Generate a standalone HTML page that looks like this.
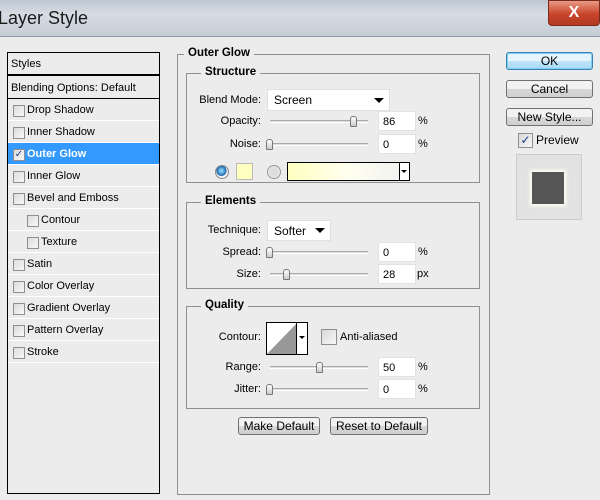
<!DOCTYPE html>
<html><head><style>
*{box-sizing:border-box;margin:0;padding:0}
body{width:600px;height:500px;overflow:hidden;background:#ececec;font-family:"Liberation Sans",sans-serif;font-size:11px;color:#000;position:relative}
.a{position:absolute}
.title{left:0;top:0;width:600px;height:37px;background:linear-gradient(#bfc8d2,#d6dce3 40%,#c4ccd5);border-bottom:1px solid #8e99a5}
.list{left:7px;top:52px;width:153px;height:442px;border:1px solid #000;background:#ececec}
.row{position:absolute;left:0;width:151px;height:22px;border-bottom:1px solid #fff;line-height:22px;padding-left:19px}
.cb{position:absolute;width:12px;height:12px;border:1px solid #8f8f8f;background:linear-gradient(135deg,#dcdcdc,#f8f8f8);top:6px;left:5px}
.grp{position:absolute;border:1px solid #8f8f8f}
.lg{position:absolute;top:-8px;background:#ececec;padding:0 4px;font-weight:bold;font-size:11.5px}
.lbl{position:absolute;text-align:right;width:100px}
.inp{position:absolute;width:38px;height:20px;background:#fff;border:1px solid #e2e2e2;padding:4px 0 0 4px}
.trk{position:absolute;height:3px;border-top:1px solid #aaa;border-bottom:1px solid #fff;background:#ddd;width:98px}
.th{position:absolute;width:7px;height:11px;border:1px solid #777;border-radius:3px 3px 1px 1px;background:linear-gradient(#fff,#ccc)}
.btn{position:absolute;border:1px solid #707070;border-radius:3px;background:linear-gradient(#f2f2f2 50%,#d8d8d8 50%,#cfcfcf);text-align:center;line-height:16px;font-size:12px}
.dd{position:absolute;background:#fff;border:1px solid #e0e0e0;font-size:12px;padding:3px 0 0 6px}
.tri{position:absolute;width:0;height:0;border-left:5px solid transparent;border-right:5px solid transparent;border-top:5px solid #000}
</style></head><body>
<div class="a title"></div>
<div class="a" style="left:-2px;top:8px;font-size:18px;color:#1a1a1a">Layer Style</div>
<div class="a" style="left:548px;top:0;width:52px;height:26px;border-radius:0 0 4px 4px;background:linear-gradient(#e89a85,#c8442a 55%,#b33a22);border:1px solid #7a2a1c;color:#fff;font-weight:bold;font-size:16px;text-align:center;line-height:24px">X</div>

<div class="a list">
<div class="row" style="top:0;height:23px;padding-left:3px;border-bottom:2px solid #000">Styles</div>
<div class="row" style="top:24px;height:22px;padding-left:3px;border-bottom:1px solid #000">Blending Options: Default</div>
<div class="row" style="top:46px"><span class="cb"></span>Drop Shadow</div>
<div class="row" style="top:68px"><span class="cb"></span>Inner Shadow</div>
<div class="row" style="top:90px;background:#3399ff;color:#fff;font-weight:bold"><span class="cb" style="color:#1a3a8a;font-size:10px;line-height:10px;text-align:center;font-weight:normal">✓</span>Outer Glow</div>
<div class="row" style="top:112px"><span class="cb"></span>Inner Glow</div>
<div class="row" style="top:134px"><span class="cb"></span>Bevel and Emboss</div>
<div class="row" style="top:156px;padding-left:33px"><span class="cb" style="left:19px"></span>Contour</div>
<div class="row" style="top:178px;padding-left:33px"><span class="cb" style="left:19px"></span>Texture</div>
<div class="row" style="top:200px"><span class="cb"></span>Satin</div>
<div class="row" style="top:222px"><span class="cb"></span>Color Overlay</div>
<div class="row" style="top:244px"><span class="cb"></span>Gradient Overlay</div>
<div class="row" style="top:266px"><span class="cb"></span>Pattern Overlay</div>
<div class="row" style="top:288px"><span class="cb"></span>Stroke</div>
</div>

<div class="grp" style="left:177px;top:54px;width:313px;height:441px"><span class="lg" style="left:6px">Outer Glow</span></div>
<div class="grp" style="left:186px;top:73px;width:294px;height:110px"><span class="lg" style="left:14px">Structure</span></div>
<div class="grp" style="left:186px;top:202px;width:294px;height:87px"><span class="lg" style="left:14px">Elements</span></div>
<div class="grp" style="left:186px;top:306px;width:294px;height:103px"><span class="lg" style="left:14px">Quality</span></div>

<div class="lbl" style="left:161px;top:94px">Blend Mode:</div>
<div class="dd" style="left:267px;top:89px;width:123px;height:22px">Screen</div><div class="tri" style="left:374px;top:98px"></div>
<div class="lbl" style="left:161px;top:115px">Opacity:</div>
<div class="trk" style="left:270px;top:120px"></div><div class="th" style="left:350px;top:116px"></div>
<div class="inp" style="left:378px;top:111px">86</div><div class="a" style="left:418px;top:115px">%</div>
<div class="lbl" style="left:161px;top:138px">Noise:</div>
<div class="trk" style="left:270px;top:143px"></div><div class="th" style="left:266px;top:139px"></div>
<div class="inp" style="left:378px;top:134px">0</div><div class="a" style="left:418px;top:138px">%</div>
<div class="a" style="left:215px;top:165px;width:14px;height:14px;border-radius:50%;border:1px solid #888;background:radial-gradient(circle at 45% 40%,#7cc8f2 15%,#1864a8 50%,#f0f0f0 55%)"></div>
<div class="a" style="left:236px;top:163px;width:17px;height:17px;background:#ffffc0;border:1px solid #bbb"></div>
<div class="a" style="left:267px;top:165px;width:14px;height:14px;border-radius:50%;border:1px solid #999;background:radial-gradient(circle,#ddd 40%,#f4f4f4)"></div>
<div class="a" style="left:287px;top:162px;width:123px;height:19px;border:1px solid #000;background:linear-gradient(90deg,#ffffc0,#fffff0 50%,#f0f0f0);"><div class="a" style="right:0;top:0;width:10px;height:17px;background:#fff;border-left:1px solid #000"></div><div class="tri" style="right:2px;top:7px;border-width:3px 3px 0"></div></div>

<div class="lbl" style="left:161px;top:224px">Technique:</div>
<div class="dd" style="left:267px;top:220px;width:64px;height:21px">Softer</div><div class="tri" style="left:315px;top:228px"></div>
<div class="lbl" style="left:161px;top:246px">Spread:</div>
<div class="trk" style="left:270px;top:251px"></div><div class="th" style="left:266px;top:247px"></div>
<div class="inp" style="left:378px;top:242px">0</div><div class="a" style="left:418px;top:246px">%</div>
<div class="lbl" style="left:161px;top:268px">Size:</div>
<div class="trk" style="left:270px;top:273px"></div><div class="th" style="left:283px;top:269px"></div>
<div class="inp" style="left:378px;top:264px">28</div><div class="a" style="left:417px;top:268px">px</div>

<div class="lbl" style="left:161px;top:331px">Contour:</div>
<div class="a" style="left:266px;top:322px;width:42px;height:33px;border:1px solid #000;background:#fff">
<svg width="30" height="31" style="position:absolute;left:0;top:0"><polygon points="30,0 30,31 0,31" fill="#999"/></svg>
<div class="a" style="left:29px;top:0;width:1px;height:31px;background:#000"></div><div class="tri" style="left:32px;top:13px;border-width:3px 3px 0"></div></div>
<div class="a" style="left:321px;top:329px;width:16px;height:16px;border:1px solid #8f8f8f;background:linear-gradient(135deg,#d8d8d8,#f8f8f8)"></div>
<div class="a" style="left:340px;top:331px">Anti-aliased</div>
<div class="lbl" style="left:161px;top:361px">Range:</div>
<div class="trk" style="left:270px;top:366px"></div><div class="th" style="left:316px;top:362px"></div>
<div class="inp" style="left:378px;top:357px">50</div><div class="a" style="left:418px;top:361px">%</div>
<div class="lbl" style="left:161px;top:383px">Jitter:</div>
<div class="trk" style="left:270px;top:388px"></div><div class="th" style="left:266px;top:384px"></div>
<div class="inp" style="left:378px;top:379px">0</div><div class="a" style="left:418px;top:383px">%</div>

<div class="btn" style="left:238px;top:417px;width:82px;height:18px">Make Default</div>
<div class="btn" style="left:330px;top:417px;width:98px;height:18px">Reset to Default</div>

<div class="btn" style="left:506px;top:52px;width:87px;height:18px;border-color:#3c7fb1;background:linear-gradient(#e5f4fc 50%,#bfe4f8 50%,#a7d9f5);box-shadow:0 0 0 1px #7fd0f7 inset">OK</div>
<div class="btn" style="left:506px;top:80px;width:87px;height:18px">Cancel</div>
<div class="btn" style="left:506px;top:108px;width:87px;height:18px">New Style...</div>
<div class="a" style="left:518px;top:133px;width:15px;height:15px;border:1px solid #8f8f8f;background:linear-gradient(135deg,#d8d8d8,#f8f8f8);color:#1a3a8a;font-size:12px;line-height:13px;text-align:center">✓</div>
<div class="a" style="left:536px;top:133px;font-size:12px">Preview</div>
<div class="a" style="left:516px;top:154px;width:66px;height:66px;border:1px solid #ccc;background:#e2e2e2"></div>
<div class="a" style="left:532px;top:172px;width:32px;height:32px;background:#555;box-shadow:0 0 4px 2px #fffff0"></div>
</body></html>
